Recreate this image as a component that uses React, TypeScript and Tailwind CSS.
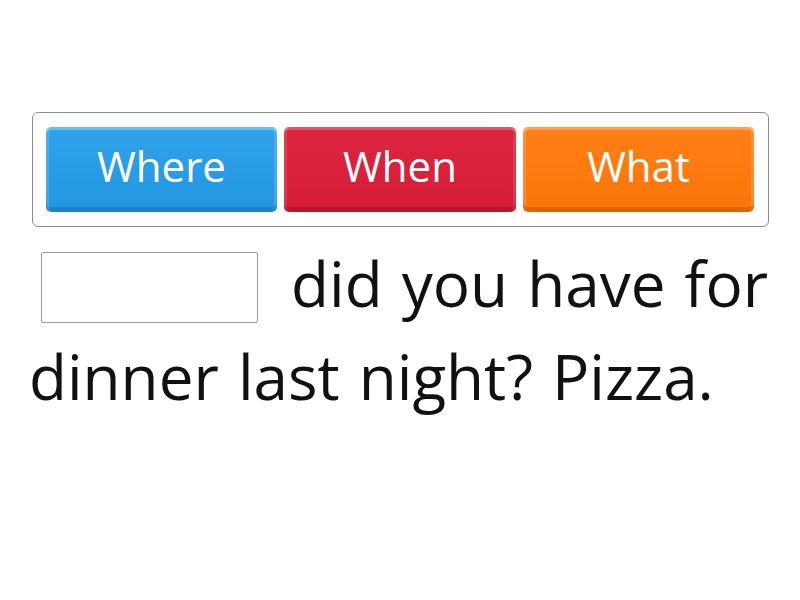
import React from "react";

const btnBase =
  "flex items-center justify-center rounded-[5px] text-white text-[42px] leading-none h-[85px]";

export default function App() {
  return (
    <div
      className="w-[800px] h-[600px] bg-white overflow-hidden"
      style={{ fontFamily: '"Open Sans", "Liberation Sans", sans-serif' }}
    >
      <div className="pt-[112px] pl-[32px]">
        <div className="w-[737px] h-[115px] border border-[#8c8c8c] rounded-[6px] pl-[13px] pt-[14px]">
          <div className="flex gap-[7px]">
            <div
              className={`${btnBase} w-[231px] bg-gradient-to-b from-[#2fa3ea] to-[#2196e2] shadow-[inset_0_3px_0_rgba(255,255,255,0.28),inset_0_-5px_0_rgba(0,0,0,0.13),inset_3px_0_0_rgba(255,255,255,0.14),inset_-3px_0_0_rgba(255,255,255,0.14)]`}
            >
              <span className="-mt-[8px]">Where</span>
            </div>
            <div
              className={`${btnBase} w-[232px] bg-gradient-to-b from-[#dd253f] to-[#d51c36] shadow-[inset_0_3px_0_rgba(255,255,255,0.22),inset_0_-5px_0_rgba(0,0,0,0.15),inset_3px_0_0_rgba(255,255,255,0.12),inset_-3px_0_0_rgba(255,255,255,0.12)]`}
            >
              <span className="-mt-[8px]">When</span>
            </div>
            <div
              className={`${btnBase} w-[231px] bg-gradient-to-b from-[#ff7f16] to-[#fb7508] shadow-[inset_0_3px_0_rgba(255,255,255,0.25),inset_0_-5px_0_rgba(0,0,0,0.13),inset_3px_0_0_rgba(255,255,255,0.14),inset_-3px_0_0_rgba(255,255,255,0.14)]`}
            >
              <span className="-mt-[8px]">What</span>
            </div>
          </div>
        </div>
      </div>
      <p className="pl-[29px] pr-[20px] mt-[10px] text-[62px] leading-[93px] text-[#111] [word-spacing:3px]">
        <span className="inline-block align-[-16px] ml-[12px] mr-[14px] w-[217px] h-[71px] border border-[#9a9a9a] rounded-[2px] bg-white"></span>
        {" "}did you have for dinner last night? Pizza.
      </p>
    </div>
  );
}
